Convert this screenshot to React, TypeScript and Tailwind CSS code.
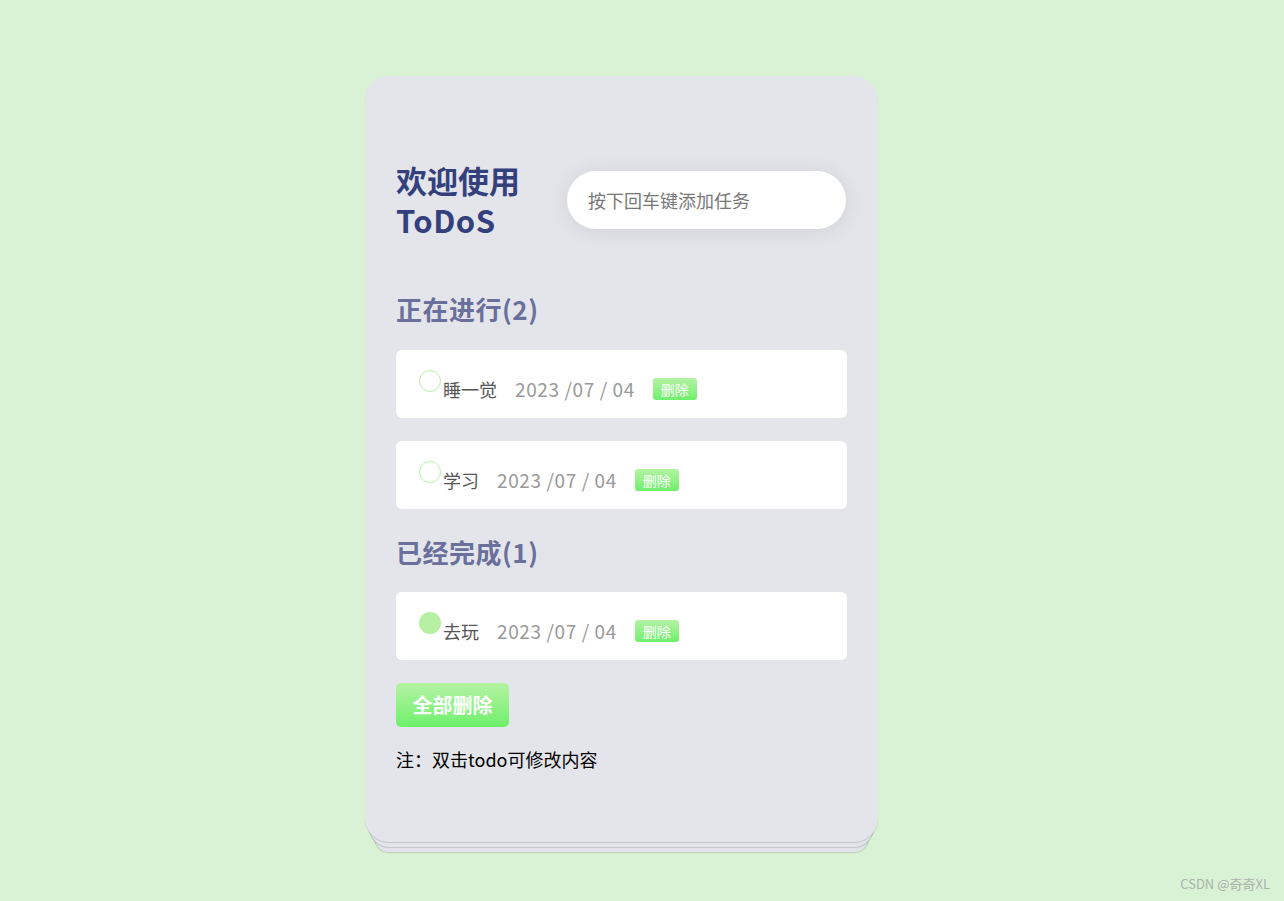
import React from "react";

const FONT = { fontFamily: '"Noto Sans CJK SC", "Microsoft YaHei", "Noto Sans", sans-serif' };

type Todo = { title: string; done: boolean };

function DelBtn() {
  return (
    <div className="ml-[18px] flex h-[22px] w-[44px] items-center justify-center rounded-[3px] bg-gradient-to-b from-[#b3f2a2] to-[#6cf06b] text-[14px] leading-none text-white">
      删除
    </div>
  );
}

function Item({ todo }: { todo: Todo }) {
  return (
    <div className="flex h-[68px] items-start rounded-[6px] bg-white pl-[23px] pt-[20px]">
      <div
        className={
          todo.done
            ? "h-[22px] w-[22px] flex-none rounded-full bg-[#b5f0a3]"
            : "h-[22px] w-[22px] flex-none rounded-full border border-[#b5f0a3] bg-white"
        }
      />
      <div className="ml-[2px] mt-[7px] flex h-[24px] items-center">
        <span className="text-[18px] leading-[24px] text-[#555]">{todo.title}</span>
        <span className="ml-[18px] text-[19px] leading-[24px] tracking-[0.6px] text-[#999]">2023 /07 / 04</span>
        <DelBtn />
      </div>
    </div>
  );
}

export default function App() {
  const doing: Todo[] = [
    { title: "睡一觉", done: false },
    { title: "学习", done: false },
  ];
  const done: Todo[] = [{ title: "去玩", done: true }];
  return (
    <div className="relative min-h-[901px] w-full bg-[#d9f2d6] pt-[76px]" style={FONT}>
      <div className="ml-[365px] w-[513px] rounded-[24px] bg-[#e4e5ea] px-[31px] pb-[71px] pt-[84px] shadow-[0_1px_1px_rgba(0,0,0,0.15),0_10px_0_-5px_#e4e5ea,0_10px_1px_-4px_rgba(0,0,0,0.15),0_20px_0_-10px_#e4e5ea,0_20px_1px_-9px_rgba(0,0,0,0.15)]">
        <div className="flex items-center">
          <h1 className="w-[171px] flex-none text-[31px] font-bold leading-[40px] text-[#343f7d]">
            <span className="block">欢迎使用</span>
            <span className="block tracking-[0.5px]">ToDoS</span>
          </h1>
          <div className="flex h-[58px] w-[279px] items-center rounded-full bg-white pl-[21px] text-[18px] text-[#777] shadow-[0_2px_22px_rgba(0,0,0,0.09)]">
            按下回车键添加任务
          </div>
        </div>

        <h2 className="mt-[51px] text-[26px] font-bold leading-[36px] tracking-[0.5px] text-[#6a6f9c]">正在进行(2)</h2>
        <div className="mt-[23px] flex flex-col gap-[23px]">
          {doing.map((t) => (
            <Item key={t.title} todo={t} />
          ))}
        </div>

        <h2 className="mt-[25px] text-[26px] font-bold leading-[36px] tracking-[0.5px] text-[#6a6f9c]">已经完成(1)</h2>
        <div className="mt-[22px] flex flex-col gap-[23px]">
          {done.map((t) => (
            <Item key={t.title} todo={t} />
          ))}
        </div>

        <div className="mt-[23px] flex h-[44px] w-[113px] items-center justify-center rounded-[5px] bg-gradient-to-b from-[#b3f2a2] to-[#6cf06b] text-[20px] font-bold text-white">
          全部删除
        </div>

        <p className="mt-[20px] text-[18px] leading-[24px] text-black">注：双击todo可修改内容</p>
      </div>

      <div className="absolute bottom-[8px] right-[14px] text-[13px] text-[#a9b3a8]">CSDN @奇奇XL</div>
    </div>
  );
}
